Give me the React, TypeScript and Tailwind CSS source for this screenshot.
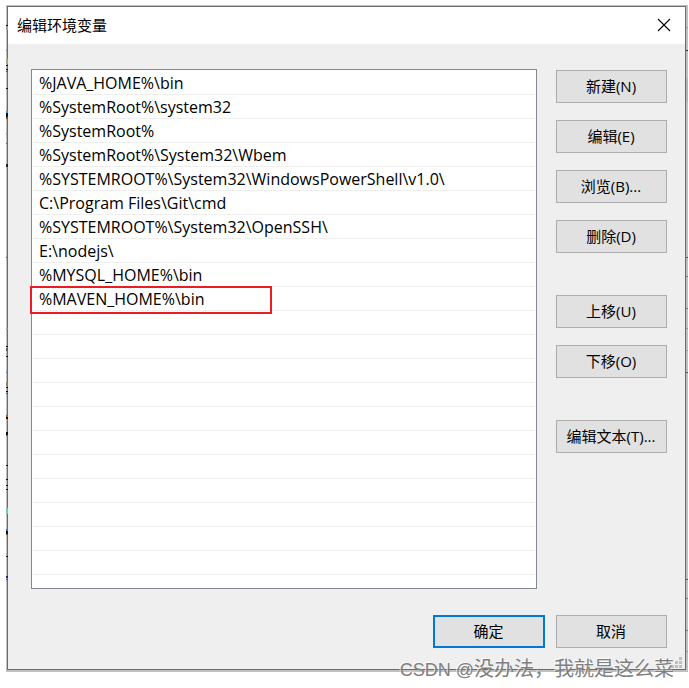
import React from "react";

const paths = [
  "%JAVA_HOME%\\bin",
  "%SystemRoot%\\system32",
  "%SystemRoot%",
  "%SystemRoot%\\System32\\Wbem",
  "%SYSTEMROOT%\\System32\\WindowsPowerShell\\v1.0\\",
  "C:\\Program Files\\Git\\cmd",
  "%SYSTEMROOT%\\System32\\OpenSSH\\",
  "E:\\nodejs\\",
  "%MYSQL_HOME%\\bin",
  "%MAVEN_HOME%\\bin",
];

const highlighted = 9;
const rowCount = 21;

const actionGroups = [
  ["新建(N)", "编辑(E)", "浏览(B)...", "删除(D)"],
  ["上移(U)", "下移(O)"],
  ["编辑文本(T)..."],
];

// Slivers of the window behind the dialog: [y, height, colour]
const leftSlivers: [number, number, string][] = [
  [20, 1, "#111"], [21, 4, "#a89a80"], [45, 1, "#777"], [54, 5, "#b09c80"], [60, 1, "#111"], [64, 1, "#111"],
  [66, 1, "#7a4a20"], [83, 1, "#111"], [106, 2, "#3a9ad8"], [108, 4, "#111"], [112, 2, "#7a4a20"],
  [128, 1, "#3a9ad8"], [138, 1, "#2a7ab0"], [159, 3, "#222"], [252, 1, "#666"], [323, 1, "#999"],
  [341, 1, "#111"], [343, 2, "#8a5a20"], [345, 1, "#2a6aa0"], [351, 1, "#111"], [367, 1, "#777"],
  [377, 4, "#a07850"], [382, 1, "#111"], [386, 1, "#111"], [388, 1, "#7a4a20"], [410, 2, "#a05a20"],
  [412, 2, "#111"], [427, 3, "#111"], [430, 1, "#a05a20"], [460, 1, "#111"], [474, 1, "#111"],
  [480, 1, "#111"], [484, 1, "#111"], [503, 6, "#6fc8b8"], [524, 2, "#2a7ad0"], [526, 3, "#111"],
  [529, 1, "#8a4a20"], [551, 1, "#111"], [571, 2, "#112a80"], [574, 1, "#555"],
];

const rightSlivers: [number, number, string][] = [
  [22, 1, "#999"], [45, 1, "#333"], [73, 24, "#b4b4b4"], [252, 1, "#555"], [271, 1, "#777"], [303, 1, "#777"],
  [323, 1, "#999"], [345, 1, "#999"], [367, 1, "#555"], [574, 1, "#555"], [593, 1, "#777"], [625, 1, "#777"],
  [646, 1, "#999"],
];

function Slivers({ marks, side }: { marks: [number, number, string][]; side: "left" | "right" }) {
  return (
    <svg
      aria-hidden="true"
      width="2"
      height="660"
      shapeRendering="crispEdges"
      className={side === "left" ? "absolute top-0 left-0" : "absolute top-0 right-0"}
    >
      {marks.map(([y, h, fill]) => (
        <rect key={y} x="0" y={y} width="2" height={h} fill={fill} />
      ))}
    </svg>
  );
}

function DialogButton({ label, primary = false }: { label: string; primary?: boolean }) {
  return (
    <button
      type="button"
      className={
        primary
          ? "h-[33px] w-28 border-2 border-[#0078d7] bg-[#e1e1e1] pr-px pb-[2px]"
          : "h-[33px] w-[111px] border border-[#adadad] bg-[#e1e1e1] pr-px pb-[2px]"
      }
    >
      {label}
    </button>
  );
}

export default function App() {
  return (
    <div className="relative bg-white pt-[5px] pr-px pb-4 pl-[6px] font-['Open_Sans','Noto_Sans_CJK_SC',sans-serif] text-[15px] leading-5 text-black">
      <div className="relative bg-[#c0c0c0] pt-px pr-[2px] pb-[2px] pl-px">
        <section aria-label="编辑环境变量" className="relative border border-[#6b6b6b] bg-[#efefef]">
          <header className="flex h-[37px] items-center justify-between bg-white pr-[14px] pb-px pl-[9px]">
            <h1>编辑环境变量</h1>
            <button type="button" aria-label="关闭" className="flex size-[14px] items-center justify-center">
              <svg viewBox="0 0 14 14" className="size-[14px]" fill="none" stroke="#000" strokeWidth="1.1">
                <path d="M1 1 13 13M13 1 1 13" />
              </svg>
            </button>
          </header>

          <div className="flex gap-[19px] pt-[25px] pr-[18px] pl-[23px]">
            <ul className="h-[520px] min-w-0 flex-1 border border-[#828790] bg-white px-px pt-px text-base">
              {Array.from({ length: rowCount }, (_, i) => (
                <li key={i} className="relative h-6 border-b border-[#efefef] pl-[6px] leading-6 whitespace-pre">
                  {paths[i]}
                  {i === highlighted && (
                    <span className="absolute -top-px -left-[3px] h-7 w-[242px] border-2 border-[#ed1c24]" />
                  )}
                </li>
              ))}
            </ul>
            <div className="flex flex-col gap-[42px] pt-px">
              {actionGroups.map((group) => (
                <div key={group[0]} className="flex flex-col gap-[17px]">
                  {group.map((label) => (
                    <DialogButton key={label} label={label} />
                  ))}
                </div>
              ))}
            </div>
          </div>

          <footer className="flex justify-end gap-[11px] pt-[26px] pr-[18px] pb-[21px]">
            <DialogButton label="确定" primary />
            <DialogButton label="取消" />
          </footer>

          <svg
            aria-hidden="true"
            viewBox="0 0 11 11"
            className="absolute right-[3px] bottom-px size-[11px]"
            fill="#bfbfbf"
            shapeRendering="crispEdges"
          >
            <path d="M8 0h3v3h-3zM4 4h3v3h-3zM8 4h3v3h-3zM0 8h3v3h-3zM4 8h3v3h-3zM8 8h3v3h-3z" />
          </svg>
        </section>
        <Slivers marks={leftSlivers} side="left" />
        <Slivers marks={rightSlivers} side="right" />
      </div>

      <p className="absolute right-[15px] bottom-1 font-['Liberation_Sans','Noto_Sans_CJK_SC',sans-serif] text-xl leading-6 whitespace-nowrap text-[#808080] [text-shadow:-1px_-1px_0_#ffffffb0]">
        <span className="text-lg">CSDN @</span>没办法，我就是这么菜
      </p>
    </div>
  );
}
